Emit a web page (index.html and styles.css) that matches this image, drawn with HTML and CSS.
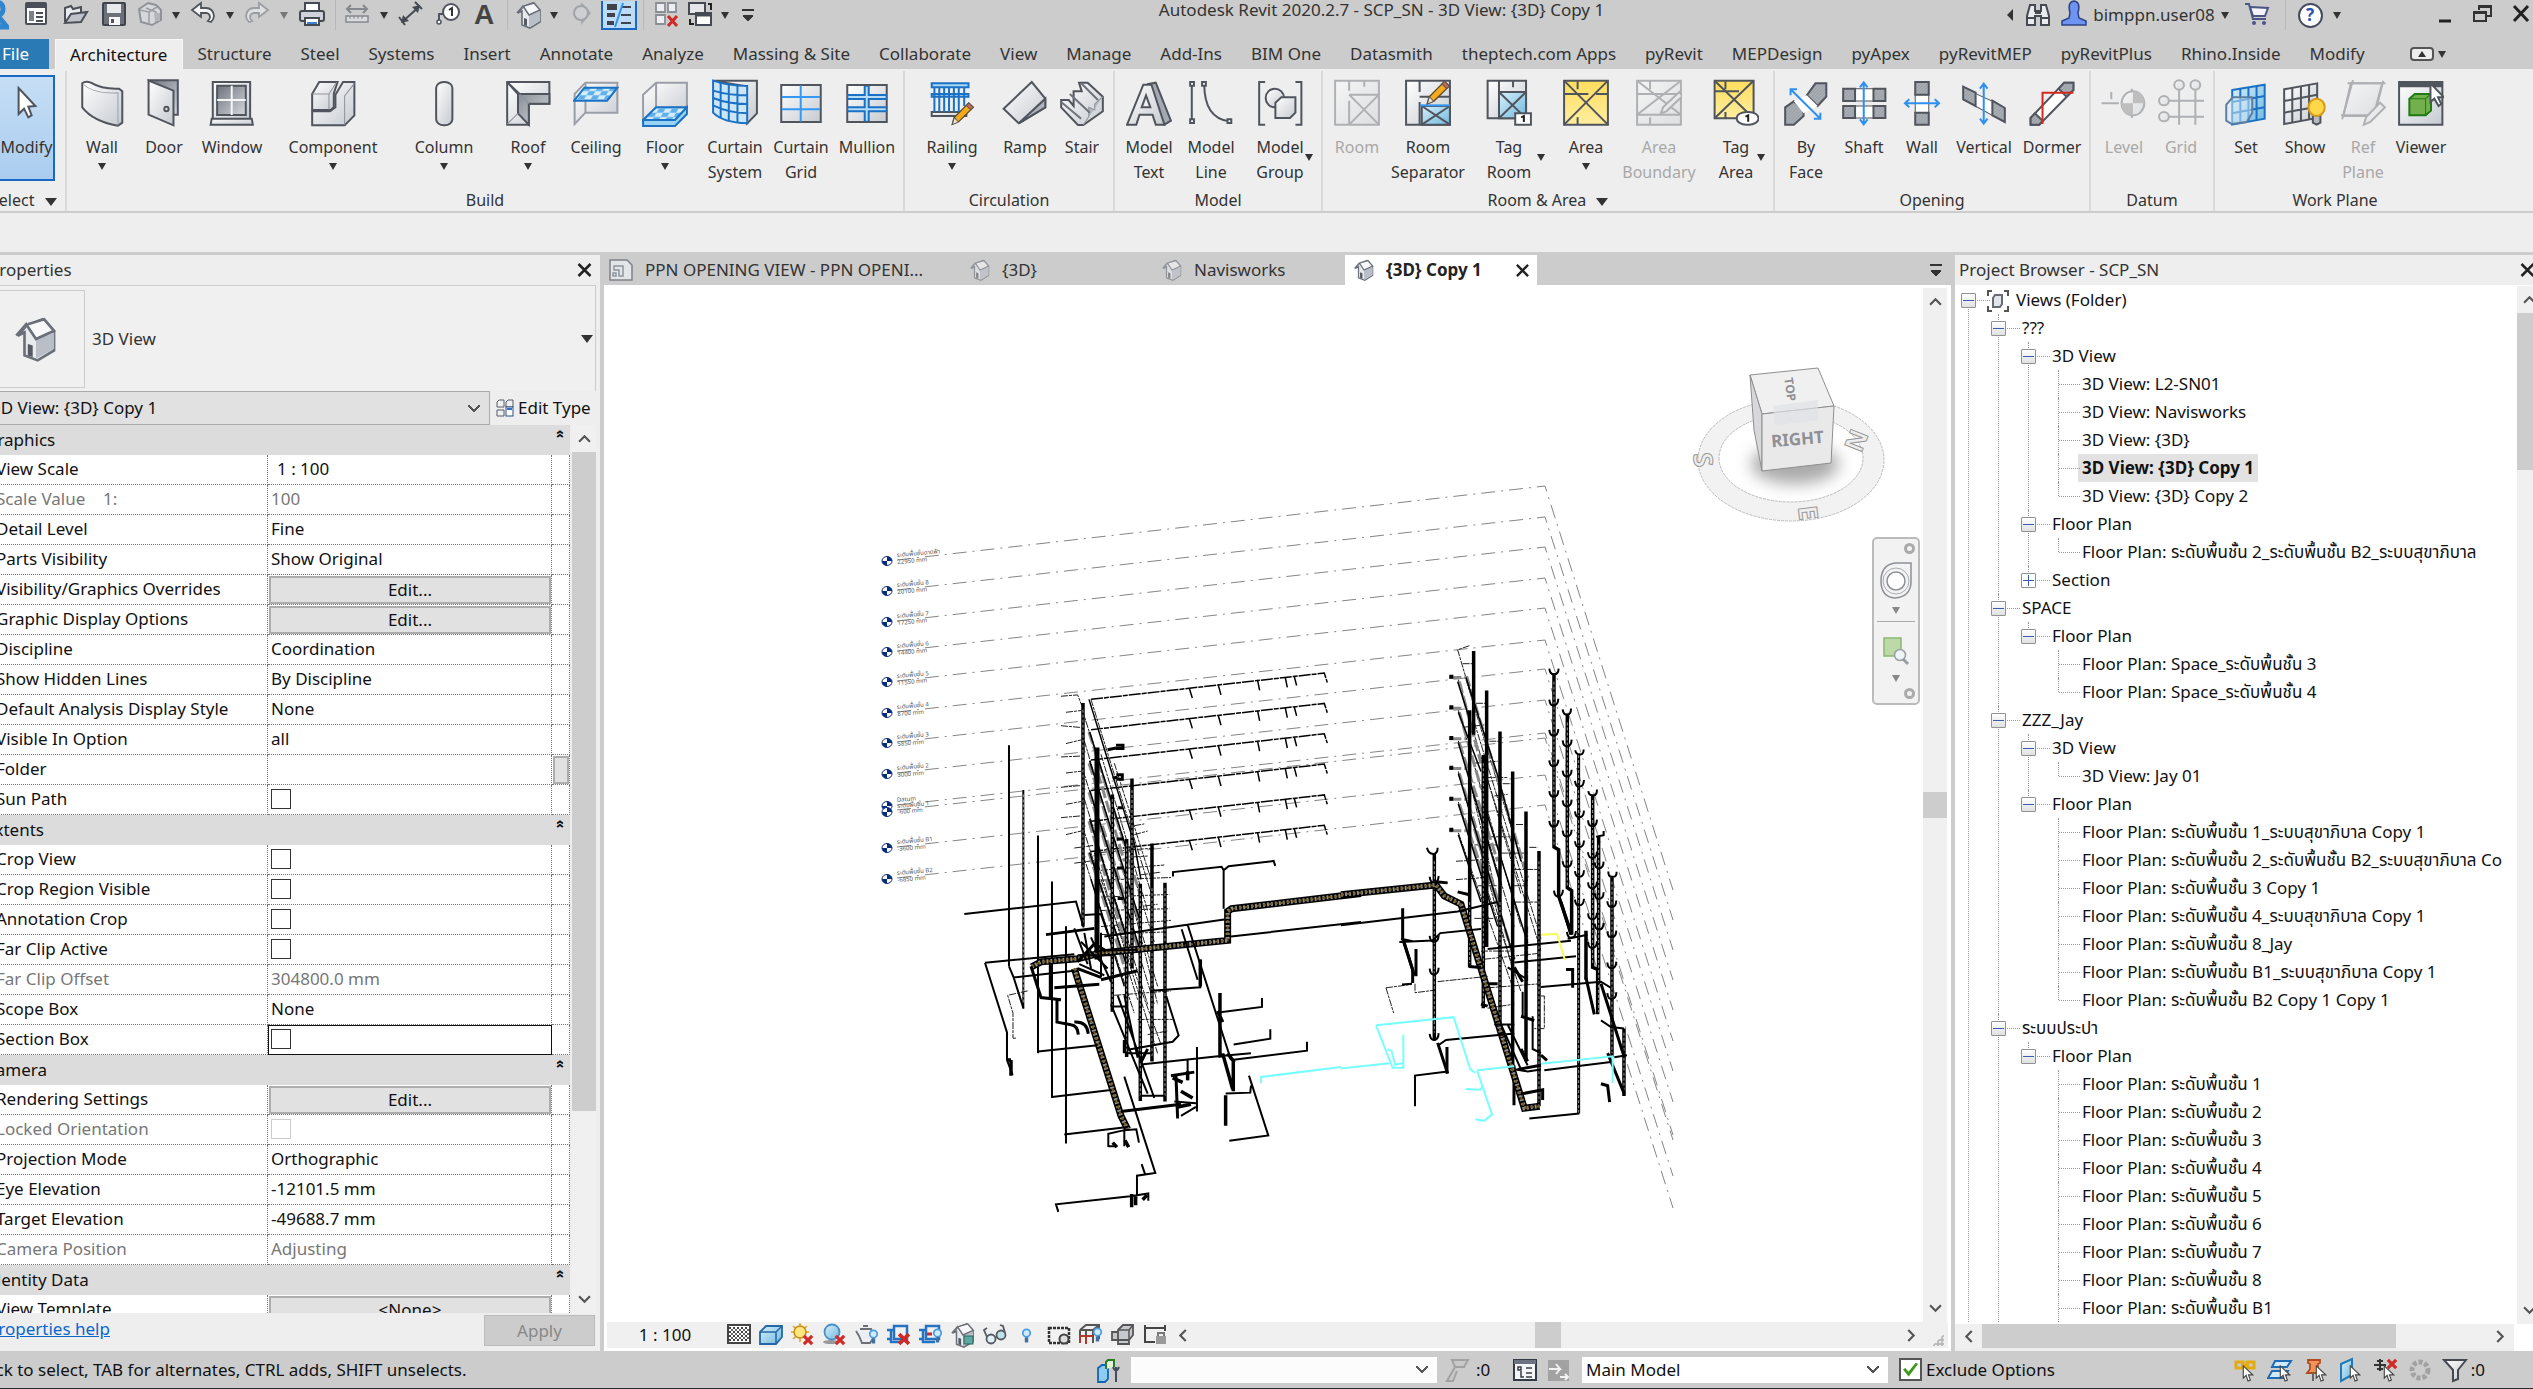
FILE: index.html
```html
<!DOCTYPE html>
<html lang="en">
<head>
<meta charset="utf-8">
<title>Autodesk Revit 2020.2.7 - SCP_SN - 3D View: {3D} Copy 1</title>
<link rel="stylesheet" href="styles.css">
</head>
<body>
<svg class="defs" aria-hidden="true">
  <defs>
    <linearGradient id="metal" x1="0" y1="0" x2="1" y2="1"><stop offset="0" stop-color="#fff"/><stop offset="1" stop-color="#c6cad0"/></linearGradient>
    <linearGradient id="steel" x1="0" y1="0" x2="1" y2="1"><stop offset="0" stop-color="#6d727c"/><stop offset="1" stop-color="#d5d8dd"/></linearGradient>
    <linearGradient id="sky" x1="0" y1="0" x2="1" y2="1"><stop offset="0" stop-color="#d8effa"/><stop offset="1" stop-color="#6fb9df"/></linearGradient>
    <linearGradient id="gold" x1="0" y1="0" x2="0" y2="1"><stop offset="0" stop-color="#ffdd5c"/><stop offset="1" stop-color="#ffeea0"/></linearGradient>
    <pattern id="tiles" width="24" height="26" patternUnits="userSpaceOnUse" patternTransform="skewX(-20)"><rect width="24" height="26" fill="#d4ecfb"/><path d="M0 0h12v13H0zM12 13h12v13H12z" fill="#5fb0ea" stroke="none"/></pattern>
    <pattern id="hatch" width="6" height="10" patternUnits="userSpaceOnUse"><rect width="6" height="10" fill="#a9adb4"/><path d="M0 10L6 0" stroke="#7d828a"/></pattern>
    <symbol id="house" viewBox="0 0 26 28"><path d="M2 12L6 10V24L14 27L24 21V10L17 2L7 6Z" fill="#e8eaee" stroke="#6a6f78" stroke-width="1.6"/><path d="M13 14V26L24 20V10Z" fill="#b9bec7"/><path d="M1 12L7 5L13 14L24 9L18 2L8 5" fill="#f8f8fa" stroke="#6a6f78" stroke-width="1.6"/><path d="M8 17l3 1v7l-3-1z" fill="#555a63"/></symbol>
    <symbol id="pencil" viewBox="0 0 44 74"><path d="M2 72L6 50L34 4L43 18L14 64Z" fill="#f6ab1c" stroke="#5c4a2a" stroke-width="3"/><path d="M34 4L43 18L38 26L29 12Z" fill="#c9674a"/><path d="M2 72L6 50L14 64Z" fill="#f3e3c8"/></symbol>
    <symbol id="redx" viewBox="0 0 10 10"><path d="M1.5 1.5L8.5 8.5M8.5 1.5L1.5 8.5" stroke="#cf2a27" stroke-width="2.6"/></symbol>
    <symbol id="bulb" viewBox="0 0 12 20"><circle cx="6" cy="6" r="4.4" fill="#cfeafc" stroke="#4a9be0" stroke-width="2"/><path d="M4 11h4v6H4z" fill="#3f6fa3"/></symbol>
    <symbol id="cursor" viewBox="0 0 12 18"><path d="M1 1V14L4 11L6 17L8.500 16L6.500 10.500H11Z" fill="#fff" stroke="#444" stroke-width="1.200"/></symbol>
  </defs>
</svg>

<div class="app">
  <header class="titlebar">
    <div class="qat">
      <button class="tool" aria-label="Revit"><svg class="q" viewBox="0 0 26 30"><path d="M6 2H14Q20 3 20 9Q20 14 15 16L24 27H17L9 16M9 7V26" fill="none" stroke="#2f86cf" stroke-width="5"/></svg></button>
      <button class="tool" aria-label="Project browser"><svg class="q" viewBox="0 0 26 30"><rect x="3" y="3" width="20" height="21" rx="1" fill="#fff" stroke="#4b4f57" stroke-width="2"/><path d="M3 6H23" stroke="#4b4f57" stroke-width="4"/><path d="M6 11h5v10H6z" fill="#7a7f88"/><path d="M13 13h7M13 17h7M13 21h7" stroke="#4b4f57" stroke-width="2"/></svg></button>
      <button class="tool" aria-label="Open"><svg class="q" viewBox="0 0 26 30"><path d="M2 22V8L8 6L10 9L18 7V12" fill="#e9ebef" stroke="#4b4f57" stroke-width="2"/><path d="M2 23L8 14L24 12L18 22Z" fill="#bfc4cc" stroke="#4b4f57" stroke-width="2"/></svg></button>
      <button class="tool" aria-label="Save"><svg class="q" viewBox="0 0 26 30"><rect x="2" y="3" width="22" height="22" rx="1" fill="#6b7079" stroke="#3f434b" stroke-width="2"/><path d="M6 4h14v9H6z" fill="#e8eaee"/><path d="M8 17h11v8H8z" fill="#f6f6f8"/><path d="M10 19h3v4h-3z" fill="#555"/></svg></button>
      <button class="tool" aria-label="Synchronize" disabled><svg class="q" viewBox="0 0 26 30"><path d="M2 9L11 3L19 5L24 10V20L15 25L4 22Z" fill="#d6d7da" stroke="#8f9298" stroke-width="2"/><path d="M3 10L12 12V24M12 12L20 7M9 8L19 12V22" fill="none" stroke="#9b9ea4" stroke-width="1.500"/><path d="M17 13h6v8h-5z" fill="#b2b4b9"/></svg></button>
      <i class="caret"></i>
      <button class="tool" aria-label="Undo"><svg class="q" viewBox="0 0 26 30"><path d="M11 3L2 10L11 17V13H17Q20 14 20 17Q20 19 18 21L21 22Q24 19 24 16Q23 8 16 8H11Z" fill="#f4f5f7" stroke="#50555d" stroke-width="1.800"/></svg></button>
      <i class="caret"></i>
      <button class="tool" aria-label="Redo" disabled><svg class="q" viewBox="0 0 26 30"><path d="M15 3L24 10L15 17V13H9Q6 14 6 17Q6 19 8 21L5 22Q2 19 2 16Q3 8 10 8H15Z" fill="#dfe0e2" stroke="#9a9da3" stroke-width="1.800"/></svg></button>
      <i class="caret pale"></i>
      <button class="tool" aria-label="Print"><svg class="q" viewBox="0 0 26 30"><path d="M6 12V3H20V12" fill="#fff" stroke="#454a52" stroke-width="2"/><rect x="1" y="11" width="24" height="10" rx="2" fill="#cfd2d8" stroke="#454a52" stroke-width="2"/><path d="M6 18H20V25H6Z" fill="#fff" stroke="#454a52" stroke-width="2"/><path d="M8 22h10v2H8z" fill="#3b83cf"/></svg></button>
      <i class="bar"></i>
      <button class="tool" aria-label="Measure"><svg class="q" viewBox="0 0 26 30"><path d="M3 9H23M7 5L3 9L7 13M19 5L23 9L19 13" fill="none" stroke="#85888e" stroke-width="2"/><rect x="2" y="16" width="22" height="6" fill="#d9dbde" stroke="#85888e" stroke-width="1.500"/><path d="M6 16v3M10 16v3M14 16v3M18 16v3" stroke="#85888e"/></svg></button>
      <i class="caret"></i>
      <button class="tool" aria-label="Aligned dimension"><svg class="q" viewBox="0 0 26 30"><path d="M4 22L22 6M1 17L7 25M17 2L24 9" stroke="#454a52" stroke-width="2"/><path d="M3 23l2-8 6 6zM22 5l-2 8-6-6z" fill="#454a52"/></svg></button>
      <button class="tool" aria-label="Tag"><svg class="q" viewBox="0 0 26 30"><path d="M4 22V14H10" fill="none" stroke="#50555d" stroke-width="2"/><circle cx="4" cy="22" r="2" fill="#fff" stroke="#50555d" stroke-width="1.500"/><circle cx="16" cy="12" r="8" fill="#fff" stroke="#50555d" stroke-width="2"/><path d="M14 10L17 8V16" fill="none" stroke="#333" stroke-width="2"/></svg></button>
      <button class="tool letter" aria-label="Text">A</button>
      <i class="bar"></i>
      <button class="tool" aria-label="Default 3D view"><svg class="q"><use href="#house"/></svg></button>
      <i class="caret"></i>
      <button class="tool" aria-label="Section" disabled><svg class="q" viewBox="0 0 26 30"><path d="M12 2L22 13L12 25Z" fill="#a5a8ad"/><circle cx="12" cy="13" r="7" fill="#cdcfd2" stroke="#a0a3a8" stroke-width="2"/></svg></button>
      <button class="tool on" aria-label="Thin lines"><svg class="q" viewBox="0 0 26 30"><path d="M1 6H11" stroke="#3f434b" stroke-width="6"/><path d="M15 6H25M15 14H25M15 22H25" stroke="#3f434b" stroke-width="2"/><path d="M1 14H9M1 22H8" stroke="#3f434b" stroke-width="4"/><path d="M17 2L9 26" stroke="#2f93f5" stroke-width="2"/></svg></button>
      <i class="bar"></i>
      <button class="tool" aria-label="Close inactive views"><svg class="q" viewBox="0 0 26 30"><path d="M3 3h9v9H3zM15 3h8v9h-8zM3 15h9v9H3z" fill="#eceef1" stroke="#8b8e95" stroke-width="1.800"/><path d="M15 16L24 26M24 16L15 26" stroke="#cf2a27" stroke-width="3"/></svg></button>
      <button class="tool" aria-label="Switch windows"><svg class="q" viewBox="0 0 26 30"><rect x="2" y="3" width="16" height="11" fill="#e4e6ea" stroke="#454a52" stroke-width="2"/><rect x="9" y="13" width="15" height="12" fill="#fff" stroke="#454a52" stroke-width="2"/><path d="M9 15h15" stroke="#454a52" stroke-width="3"/><path d="M21 4h3v6M3 19v5h4" fill="none" stroke="#222" stroke-width="2"/></svg></button>
      <i class="caret"></i>
      <i class="caret lined"></i>
    </div>
    <h1 class="title">Autodesk Revit 2020.2.7 - SCP_SN - 3D View: {3D} Copy 1</h1>
    <div class="account">
      <i class="caret left"></i>
      <button class="tool" aria-label="Search"><svg class="q" viewBox="0 0 26 30"><path d="M5 5h5v6h6V5h5l3 11v9h-8v-9h-6v9H2v-9z" fill="#e9ebee" stroke="#454a52" stroke-width="2"/><path d="M2 18h8M16 18h8M10 13h6" stroke="#454a52" stroke-width="2"/></svg></button>
      <button class="tool" aria-label="Account"><svg class="q" viewBox="0 0 26 30"><path d="M9 13Q6 2 13 1Q20 2 17 13L18 18L25 21V25H1V21L8 18Z" fill="#6d94f0" stroke="#2c4386" stroke-width="1.500"/></svg></button>
      <span class="user">bimppn.user08</span>
      <i class="caret"></i>
      <button class="tool" aria-label="App store"><svg class="q" viewBox="0 0 26 30"><path d="M1 4H5L9 19H22" fill="none" stroke="#4c5685" stroke-width="2"/><path d="M6 7L24 8L21 16H9Z" fill="#f4f5fa" stroke="#4c5685" stroke-width="2"/><circle cx="10" cy="23" r="2" fill="#4c5685"/><circle cx="20" cy="23" r="2" fill="#4c5685"/></svg></button>
      <i class="bar"></i>
      <button class="help" aria-label="Help">?</button>
      <i class="caret"></i>
      <span></span>
      <button class="tool" aria-label="Minimize"><svg class="q" viewBox="0 0 26 30"><path d="M7 21H19" stroke="#222" stroke-width="3"/></svg></button>
      <button class="tool" aria-label="Restore"><svg class="q" viewBox="0 0 26 30"><path d="M10 10V6H22V16H18" fill="none" stroke="#333" stroke-width="2"/><path d="M10 6.500H22" stroke="#333" stroke-width="3"/><rect x="5" y="12" width="12" height="9" fill="none" stroke="#333" stroke-width="2"/><path d="M5 12.500H17" stroke="#333" stroke-width="3"/></svg></button>
      <button class="tool" aria-label="Close"><svg class="q" viewBox="0 0 26 30"><path d="M6 6L20 21M20 6L6 21" stroke="#222" stroke-width="3"/></svg></button>
    </div>
  </header>

  <nav class="tabs">
    <a class="tab file" href="#file">File</a><a class="tab current" href="#a">Architecture</a><a class="tab" href="#a">Structure</a><a class="tab" href="#a">Steel</a><a class="tab" href="#a">Systems</a><a class="tab" href="#a">Insert</a><a class="tab" href="#a">Annotate</a><a class="tab" href="#a">Analyze</a><a class="tab" href="#a">Massing &amp; Site</a><a class="tab" href="#a">Collaborate</a><a class="tab" href="#a">View</a><a class="tab" href="#a">Manage</a><a class="tab" href="#a">Add-Ins</a><a class="tab" href="#a">BIM One</a><a class="tab" href="#a">Datasmith</a><a class="tab" href="#a">theptech.com Apps</a><a class="tab" href="#a">pyRevit</a><a class="tab" href="#a">MEPDesign</a><a class="tab" href="#a">pyApex</a><a class="tab" href="#a">pyRevitMEP</a><a class="tab" href="#a">pyRevitPlus</a><a class="tab" href="#a">Rhino.Inside</a><a class="tab" href="#a">Modify</a>
    <button class="collapse" aria-label="Minimize ribbon"><i class="caret up"></i></button><i class="caret"></i>
  </nav>

  <div class="ribbon">
    <section class="panel select">
      <div class="cmds"><button class="cmd modify"><svg class="r" viewBox="4 234 85 150" preserveAspectRatio="none"><path d="M31 264V342L41 326L49 352L55 346L49 320L62 318Z" fill="#fff"/></svg><span>Modify</span></button></div>
      <h2>Select <i class="caret big"></i></h2>
    </section>
    <section class="panel build">
      <div class="cmds">
        <button class="cmd"><svg class="r" viewBox="146 234 85 150" preserveAspectRatio="none"><path d="M152 250Q158 242 168 248Q188 268 220 266L226 274V368L218 377Q172 364 152 322Z"/><path d="M153 252Q175 284 218 278V376" fill="none" stroke="#9da1a9" stroke-width="1"/></svg><span>Wall</span><i class="caret"></i></button>
        <button class="cmd"><svg class="r" viewBox="260 234 85 150" preserveAspectRatio="none"><path d="M274 241H328V344H300Z" fill="url(#steel)"/><path d="M274 242L320 272V376L274 344Z"/><ellipse cx="307" cy="327" rx="4" ry="7"/></svg><span>Door</span></button>
        <button class="cmd"><svg class="r" viewBox="385 234 85 150" preserveAspectRatio="none"><rect x="392" y="246" width="69" height="112"/><rect x="400" y="257" width="53" height="88" fill="url(#steel)"/><path d="M427 257V345M400 300H453" stroke="#f4f5f7" stroke-width="2"/><path d="M390 356H464L466 374H388Z"/></svg><span>Window</span></button>
        <button class="cmd"><svg class="r" viewBox="573 234 85 150" preserveAspectRatio="none"><path d="M577 282L590 246H624L617 280V322L611 330H577Z"/><path d="M577 282H608L622 247M608 282V328" fill="none" stroke="#8e929a" stroke-width="1"/><path d="M577 334H610L620 322V284L634 246H655V346L637 376H577Z"/><path d="M655 250L637 288V374" fill="none" stroke="#8e929a" stroke-width="1"/></svg><span>Component</span><i class="caret"></i></button>
        <button class="cmd"><svg class="r" viewBox="778 234 85 150" preserveAspectRatio="none"><rect x="806" y="246" width="30" height="130" rx="14" ry="18"/></svg><span>Column</span><i class="caret"></i></button>
        <button class="cmd"><svg class="r" viewBox="933 234 85 150" preserveAspectRatio="none"><path d="M937 246H1015V311H977V374H937Z"/><path d="M937 246L960 282H1015V311H977V374L957 340V282Z" fill="url(#steel)"/><path d="M960 282L977 311M937 372L957 340" stroke="#8e929a" stroke-width="1"/></svg><span>Roof</span><i class="caret"></i></button>
        <button class="cmd"><svg class="r" viewBox="1059 234 85 150" preserveAspectRatio="none"><path d="M1062 282L1082 248H1141V338H1082L1062 372Z" stroke="#9a9ea6"/><path d="M1082 248V338" stroke="#9a9ea6"/><path d="M1080 263H1141L1122 302H1061Z" fill="url(#tiles)" stroke="#1b72c4"/></svg><span>Ceiling</span></button>
        <button class="cmd"><svg class="r" viewBox="1182 234 85 150" preserveAspectRatio="none"><path d="M1184 284L1208 248H1265V322L1208 324L1184 360Z" stroke="#9a9ea6"/><path d="M1208 248V322" stroke="#9a9ea6"/><path d="M1208 322H1265L1243 360H1184Z" fill="url(#tiles)" stroke="#1b72c4"/><path d="M1184 360H1243L1265 322V342L1243 378H1184Z" fill="#9ad4f5" stroke="#1b72c4"/></svg><span>Floor</span><i class="caret"></i></button>
        <button class="cmd"><svg class="r" viewBox="1315 234 85 150" preserveAspectRatio="none"><path d="M1317 242H1398V340L1380 370L1376 258Z"/><path d="M1317 242Q1345 258 1380 258V370Q1335 368 1317 338Z" fill="#cbe6f8" stroke="#1b72c4"/><path d="M1331 248V354M1346 254V364M1362 258V369M1317 272Q1345 286 1380 286M1317 294Q1345 312 1380 312M1317 316Q1345 338 1380 340" fill="none" stroke="#1b72c4"/></svg><span>Curtain<br>System</span></button>
        <button class="cmd"><svg class="r" viewBox="1434 234 85 150" preserveAspectRatio="none"><rect x="1440" y="255" width="73" height="111"/><path d="M1476 256V365M1441 291H1512M1441 328H1512" stroke="#3598f4"/></svg><span>Curtain<br>Grid</span></button>
        <button class="cmd"><svg class="r" viewBox="-10 234 85 150" preserveAspectRatio="none"><rect x="-4" y="255" width="73" height="111"/><path d="M-4 291H69M-4 328H69M32 258V364" stroke="#1b72c4" stroke-width="6"/><path d="M-2 291H67M-2 328H67M32 260V362" stroke="#b6dcf7" stroke-width="2"/></svg><span>Mullion</span></button>
      </div>
      <h2>Build</h2>
    </section>
    <section class="panel circulation">
      <div class="cmds">
        <button class="cmd"><svg class="r" viewBox="147 234 85 150" preserveAspectRatio="none"><path d="M152 336H216V348H152Z"/><path d="M152 250H220V262H152ZM152 282H220V290H152Z" fill="#a9d6f5" stroke="#1b72c4"/><path d="M157 262V336M166 262V336M175 262V336M184 262V336M193 262V336M202 262V336M212 262V318" stroke="#1b72c4" stroke-width="2"/><use href="#pencil" x="188" y="302" width="42" height="76"/></svg><span>Railing</span><i class="caret"></i></button>
        <button class="cmd"><svg class="r" viewBox="281 234 85 150" preserveAspectRatio="none"><path d="M284 326L336 246L361 296V322L312 370Z"/><path d="M312 370L361 296V322Z" fill="#aeb2ba"/></svg><span>Ramp</span></button>
        <button class="cmd"><svg class="r" viewBox="383 234 85 150" preserveAspectRatio="none"><path d="M420 248H436L464 290V334L428 375H418L387 322V300H401L410 318V274H425Z"/><path d="M464 290L449 312V330L438 322V350L428 375" fill="#b4b8c0" stroke="#8e929a" stroke-width="1"/><path d="M403 282L440 338M424 250L455 300M387 306L424 356" stroke="#6e737c" stroke-width="2"/></svg><span>Stair</span></button>
      </div>
      <h2>Circulation</h2>
    </section>
    <section class="panel model">
      <div class="cmds">
        <button class="cmd"><svg class="r" viewBox="511 234 85 150" preserveAspectRatio="none"><path d="M552 252L566 248L594 362L582 374L570 340H552L560 300Z" fill="#a4a9b2"/><path fill-rule="evenodd" d="M513 374L543 254H558L582 374H566L560 344H536L530 374ZM540 322H556L548 286Z"/></svg><span>Model<br>Text</span></button>
        <button class="cmd"><svg class="r" viewBox="622 234 85 150" preserveAspectRatio="none"><path d="M629 252V364M652 252Q652 354 698 364" fill="none"/><path d="M626 246h7v11h-7zM626 358h7v11h-7zM648 246h7v11h-7zM695 358h7v11h-7z" fill="#fff"/></svg><span>Model<br>Line</span></button>
        <button class="cmd wide"><svg class="r" viewBox="749 234 85 150" preserveAspectRatio="none"><path d="M764 246H753V374H764M820 246H831V374H820" fill="none"/><ellipse cx="782" cy="294" rx="17" ry="28"/><path d="M783 308L794 292H820V338L810 354H783Z"/></svg><span>Model<br>Group</span><i class="caret side"></i></button>
      </div>
      <h2>Model</h2>
    </section>
    <section class="panel rooms">
      <div class="cmds">
        <button class="cmd" disabled><svg class="r" viewBox="893 234 85 150" preserveAspectRatio="none"><rect x="895" y="242" width="81" height="132"/><path d="M921 242V272M921 302V374M921 284H976M949 242V260M921 284L976 374M976 284L921 374"/></svg><span>Room</span></button>
        <button class="cmd"><svg class="r" viewBox="1024 234 85 150" preserveAspectRatio="none"><rect x="1026" y="242" width="81" height="132"/><path d="M1055 318H1107V374H1055Z" fill="url(#sky)"/><path d="M1051 242V276M1051 306V374M1055 318L1107 374M1107 318L1055 374M1051 290H1107"/><path d="M1052 316H1107" stroke="#3598f4"/><use href="#pencil" x="1063" y="240" width="44" height="74"/></svg><span>Room<br>Separator</span></button>
        <button class="cmd wide"><svg class="r" viewBox="1176 234 85 150" preserveAspectRatio="none"><path d="M1179 242H1250V355H1179Z"/><path d="M1200 276H1250V355H1200Z" fill="url(#sky)"/><path d="M1200 242V355M1200 276L1250 355M1250 276L1200 355M1226 242V262"/><rect x="1230" y="340" width="29" height="34" fill="#fff"/><path d="M1241 352L1246 348V366" fill="none" stroke="#222"/></svg><span>Tag<br>Room</span><i class="caret side"></i></button>
        <button class="cmd"><svg class="r" viewBox="1313 234 85 150" preserveAspectRatio="none"><rect x="1315" y="242" width="81" height="132" fill="url(#gold)"/><path d="M1315 242L1396 374M1396 242L1315 374M1340 244V268M1315 282H1360M1374 282H1396M1340 352V374"/></svg><span>Area</span><i class="caret"></i></button>
        <button class="cmd" disabled><svg class="r" viewBox="1450 234 85 150" preserveAspectRatio="none"><rect x="1452" y="242" width="81" height="132"/><path d="M1452 242L1533 344M1533 242L1452 344M1476 242V268M1452 282H1533M1452 344H1533M1476 352V374"/><path d="M1496 340L1500 322L1530 276L1536 288L1506 334Z"/></svg><span>Area<br>Boundary</span></button>
        <button class="cmd wide"><svg class="r" viewBox="42 234 85 150" preserveAspectRatio="none"><rect x="45" y="242" width="72" height="113" fill="url(#gold)"/><path d="M45 242L117 355M117 242L45 355M65 244V268M45 274H90M65 336V355"/><rect x="86" y="336" width="40" height="38" rx="18" fill="#fff"/><path d="M102 350L107 346V365" fill="none" stroke="#222"/></svg><span>Tag<br>Area</span><i class="caret side"></i></button>
      </div>
      <h2>Room &amp; Area <i class="caret big"></i></h2>
    </section>
    <section class="panel opening">
      <div class="cmds">
        <button class="cmd"><svg class="r" viewBox="176 234 85 150" preserveAspectRatio="none"><path d="M180 374V322L196 304L214 330V348L196 374ZM220 286L236 250H256V290L240 318Z" fill="url(#hatch)"/><path d="M196 304L220 286L240 318L214 340Z" fill="#fff" stroke="none"/><path d="M190 268L245 356M190 286V268H202M233 356H245V338" fill="none" stroke="#2e90f0"/></svg><span>By<br>Face</span></button>
        <button class="cmd"><svg class="r" viewBox="280 234 85 150" preserveAspectRatio="none"><path d="M285 266H361V303H285ZM285 318H361V354H285Z" fill="#fff" stroke-width="1"/><path d="M284 266H306V303H284ZM340 266H362V303H340ZM284 318H306V354H284ZM340 318H362V354H340Z" fill="url(#hatch)"/><path d="M322 246V374M315 262L322 247L329 262M315 358L322 373L329 358" fill="none" stroke="#2e90f0"/></svg><span>Shaft</span></button>
        <button class="cmd"><svg class="r" viewBox="391 234 85 150" preserveAspectRatio="none"><path d="M421 284H446V338H421Z" fill="#fff" stroke-width="1"/><path d="M421 246H446V284H421ZM421 338H446V374H421Z" fill="url(#hatch)"/><path d="M402 310H465M410 298L402 310L410 322M457 298L465 310L457 322" fill="none" stroke="#2e90f0"/></svg><span>Wall</span></button>
        <button class="cmd"><svg class="r" viewBox="504 234 85 150" preserveAspectRatio="none"><path d="M530 280L562 304V346L530 318Z" fill="#fff" stroke-width="1"/><path d="M508 260L531 278V318L508 298ZM562 302L585 324V366L562 346Z" fill="url(#hatch)"/><path d="M546 250V372M539 266L546 251L553 266M539 356L546 371L553 356" fill="none" stroke="#2e90f0"/></svg><span>Vertical</span></button>
        <button class="cmd"><svg class="r" viewBox="629 234 85 150" preserveAspectRatio="none"><path d="M632 374V354L694 248H711V270L648 374Z" fill="#fff"/><path d="M684 266L694 248H711V270L698 290ZM632 374V354L640 340L654 362L648 374Z" fill="url(#hatch)"/><path d="M654 372V278H711" fill="none" stroke="#d3281e"/></svg><span>Dormer</span></button>
      </div>
      <h2>Opening</h2>
    </section>
    <section class="panel datum">
      <div class="cmds">
        <button class="cmd" disabled><svg class="r" viewBox="767 234 85 150" preserveAspectRatio="none"><path d="M768 310H800M824 266V354M786 276V298"/><ellipse cx="826" cy="310" rx="21" ry="36"/><path d="M826 274Q847 276 847 310H826ZM826 346Q805 344 805 310H826Z" fill="#777" stroke="none"/></svg><span>Level</span></button>
        <button class="cmd" disabled><svg class="r" viewBox="870 234 85 150" preserveAspectRatio="none"><path d="M909 270V374M939 270V374M890 302H955M890 350H955"/><ellipse cx="909" cy="255" rx="9" ry="14"/><ellipse cx="939" cy="255" rx="9" ry="14"/><ellipse cx="881" cy="302" rx="9" ry="14"/><ellipse cx="881" cy="350" rx="9" ry="14"/></svg><span>Grid</span></button>
      </div>
      <h2>Datum</h2>
    </section>
    <section class="panel workplane">
      <div class="cmds">
        <button class="cmd"><svg class="r" viewBox="992 234 85 150" preserveAspectRatio="none"><path d="M1009 270L1069 254V356L1009 374Z" fill="url(#sky)" stroke="#1b72c4"/><path d="M1024 266V370M1039 262V366M1054 258V361M1009 306L1069 288M1009 340L1069 322" stroke="#1b72c4"/><path d="M998 314L1010 292H1046V338L1036 366L1008 372L998 362Z" fill="#dcecf6" fill-opacity=".5" stroke="#5a7ea5"/></svg><span>Set</span></button>
        <button class="cmd"><svg class="r" viewBox="1101 234 85 150" preserveAspectRatio="none"><path d="M1105 268L1166 250V354L1105 372Z"/><path d="M1120 264V367M1136 260V363M1151 255V358M1105 303L1166 284M1105 338L1166 320"/><path d="M1158 346H1172V368L1165 374L1158 368Z" fill="#b7bac0"/><ellipse cx="1165" cy="322" rx="15" ry="26" fill="#ffd84a" stroke="#d69a1a"/></svg><span>Show</span></button>
        <button class="cmd" disabled><svg class="r" viewBox="1210 234 85 150" preserveAspectRatio="none"><path d="M1230 250H1288L1272 348H1216Z"/><path d="M1234 240L1214 358M1224 250H1294M1212 346H1276M1290 242L1272 356"/><path d="M1254 374L1258 352L1284 308L1293 322L1266 366Z"/></svg><span>Ref<br>Plane</span></button>
        <button class="cmd"><svg class="r" viewBox="1317 234 85 150" preserveAspectRatio="none"><rect x="1319" y="246" width="80" height="128"/><path d="M1319 254H1399" stroke-width="5"/><path d="M1338 296L1348 282H1378V332L1368 346H1338Z" fill="#73b04d" stroke="#1f7a12"/><path d="M1338 296H1368V346M1368 296L1378 282" fill="none" stroke="#1f7a12" stroke-width="1"/><path d="M1377 250V306L1384 296L1392 318L1397 312L1391 292H1402Z" fill="#fff"/></svg><span>Viewer</span></button>
      </div>
      <h2>Work Plane</h2>
    </section>
  </div>
  <div class="options"></div>

  <main class="workspace">
    <aside class="props">
      <header class="phead"><h2>Properties</h2><button class="x" aria-label="Close"><svg viewBox="0 0 14 14"><path d="M1 1L13 13M13 1L1 13"/></svg></button></header>
      <div class="type"><div class="thumbnail"><svg><use href="#house"/></svg></div><span>3D View</span><i class="caret big"></i></div>
      <div class="filter"><select aria-label="View"><option>3D View: {3D} Copy 1</option></select>
        <button class="edittype"><svg viewBox="0 0 18 18"><path d="M1 3L3 1H8V8H1ZM10 3L12 1H17V8H10ZM1 11H8V17H1Z" fill="#eef0f4" stroke="#555b66"/><rect x="10" y="8" width="7" height="9" fill="#fff" stroke="#2b4f86"/><path d="M11 10h5" stroke="#2b6fd0" stroke-width="2"/></svg>Edit Type</button></div>
      <div class="gridwrap">
        <div class="clip">
        <table class="ptable">
          <colgroup><col class="c1"><col class="c2"><col class="c3"></colgroup>
          <tbody>
          <tr class="sec"><th colspan="3">Graphics<button aria-label="Collapse">«</button></th></tr>
          <tr><td>View Scale</td><td class="in">1 : 100</td><td></td></tr>
          <tr class="ro"><td>Scale Value &nbsp;&nbsp; 1:</td><td>100</td><td></td></tr>
          <tr><td>Detail Level</td><td>Fine</td><td></td></tr>
          <tr><td>Parts Visibility</td><td>Show Original</td><td></td></tr>
          <tr><td>Visibility/Graphics Overrides</td><td><button class="edit">Edit...</button></td><td></td></tr>
          <tr><td>Graphic Display Options</td><td><button class="edit">Edit...</button></td><td></td></tr>
          <tr><td>Discipline</td><td>Coordination</td><td></td></tr>
          <tr><td>Show Hidden Lines</td><td>By Discipline</td><td></td></tr>
          <tr><td>Default Analysis Display Style</td><td>None</td><td></td></tr>
          <tr><td>Visible In Option</td><td>all</td><td></td></tr>
          <tr><td>Folder</td><td></td><td><button class="edit" aria-label="Browse folder"></button></td></tr>
          <tr><td><label for="sun">Sun Path</label></td><td><input type="checkbox" id="sun"></td><td></td></tr>
          <tr class="sec"><th colspan="3">Extents<button aria-label="Collapse">«</button></th></tr>
          <tr><td><label for="crop">Crop View</label></td><td><input type="checkbox" id="crop"></td><td></td></tr>
          <tr><td><label for="region">Crop Region Visible</label></td><td><input type="checkbox" id="region"></td><td></td></tr>
          <tr><td><label for="anno">Annotation Crop</label></td><td><input type="checkbox" id="anno"></td><td></td></tr>
          <tr><td><label for="far">Far Clip Active</label></td><td><input type="checkbox" id="far"></td><td></td></tr>
          <tr class="ro"><td>Far Clip Offset</td><td>304800.0 mm</td><td></td></tr>
          <tr><td>Scope Box</td><td>None</td><td></td></tr>
          <tr><td><label for="sbox">Section Box</label></td><td class="focus"><input type="checkbox" id="sbox"></td><td></td></tr>
          <tr class="sec"><th colspan="3">Camera<button aria-label="Collapse">«</button></th></tr>
          <tr><td>Rendering Settings</td><td><button class="edit">Edit...</button></td><td></td></tr>
          <tr class="ro"><td><label for="lock">Locked Orientation</label></td><td><input type="checkbox" id="lock" disabled></td><td></td></tr>
          <tr><td>Projection Mode</td><td>Orthographic</td><td></td></tr>
          <tr><td>Eye Elevation</td><td>-12101.5 mm</td><td></td></tr>
          <tr><td>Target Elevation</td><td>-49688.7 mm</td><td></td></tr>
          <tr class="ro"><td>Camera Position</td><td>Adjusting</td><td></td></tr>
          <tr class="sec"><th colspan="3">Identity Data<button aria-label="Collapse">«</button></th></tr>
          <tr><td>View Template</td><td><button class="edit">&lt;None&gt;</button></td><td></td></tr>
          </tbody>
        </table>
        </div>
        <div class="vsb p"><svg viewBox="0 0 12 8"><path d="M1 7L6 2L11 7"/></svg><div class="track"><i></i></div><svg viewBox="0 0 12 8"><path d="M1 1L6 6L11 1"/></svg></div>
      </div>
      <footer class="pfoot"><a href="#help">Properties help</a><button disabled>Apply</button></footer>
    </aside>

    <section class="doc">
      <nav class="views">
        <a class="view first" href="#v"><svg viewBox="0 0 24 22"><path d="M1 1H18L23 6V21H1Z" fill="#e3e5e8" stroke="#7d8188" stroke-width="1.500"/><path d="M5 7H14V17H10V11H5ZM4 14H7V17H4Z" fill="none" stroke="#8f959f" stroke-width="1.500"/></svg>PPN OPENING VIEW - PPN OPENI...</a>
        <a class="view dim" href="#v"><svg><use href="#house"/></svg>{3D}</a>
        <a class="view dim" href="#v"><svg><use href="#house"/></svg>Navisworks</a>
        <a class="view active" href="#v"><svg><use href="#house"/></svg>{3D} Copy 1<svg class="vx" viewBox="0 0 14 14"><path d="M1 1L13 13M13 1L1 13" stroke="#222" stroke-width="2.500"/></svg></a>
        <i class="caret lined end"></i>
      </nav>
      <div class="stage">
        <div class="canvas">
        <svg class="drawing" viewBox="603 285 1319 1037" preserveAspectRatio="xMidYMid slice">
          <defs>
            <g id="head"><ellipse rx="5" ry="4.500" fill="#fff" stroke="#062a7c"/><path d="M0 0V-4.500A5 4.500 0 0 1 5 0ZM0 0V4.500A5 4.500 0 0 1-5 0Z" fill="#062a7c"/></g>
            <g id="run" class="shared"><path d="M690 0L1390-59L1399-38" stroke-dasharray="12 1 5 1"/><path d="M985-25l9 22M1072-32l8 22M1190-42l6 22M1273-49l6 22M1300-51l7 20"/></g>
            <g id="y" class="shared"><path d="M-14-12Q-12 4 0 2Q12 2 13-14"/></g>
          </defs>
          <g class="levels">
            <path d="M896 560L1544 486L1672 890M896 590L1544 517L1672 920M896 621L1544 547L1672 950M896 651L1544 578L1672 980M896 681L1544 608L1672 1010M896 712L1544 640L1672 1041M896 742L1544 669L1672 1071M896 773L1544 700L1672 1102M896 805L1544 733L1672 1135M896 810L1544 738L1672 1140M896 847L1544 775L1672 1176M896 878L1544 805L1672 1208"/>
          </g>
          <use href="#head" x="886" y="561"/><use href="#head" x="886" y="591"/><use href="#head" x="886" y="622"/><use href="#head" x="886" y="652"/><use href="#head" x="886" y="682"/><use href="#head" x="886" y="713"/><use href="#head" x="886" y="743"/><use href="#head" x="886" y="774"/><use href="#head" x="886" y="806"/><use href="#head" x="886" y="812"/><use href="#head" x="886" y="848"/><use href="#head" x="886" y="879"/>
          <g class="tags">
            <g transform="translate(896 557) rotate(-5)"><text>ระดับพื้นชั้นดาดฟ้า</text><text y="7">22950 mm</text></g>
            <g transform="translate(896 587) rotate(-5)"><text>ระดับพื้นชั้น 8</text><text y="7">20100 mm</text></g>
            <g transform="translate(896 618) rotate(-5)"><text>ระดับพื้นชั้น 7</text><text y="7">17250 mm</text></g>
            <g transform="translate(896 648) rotate(-5)"><text>ระดับพื้นชั้น 6</text><text y="7">14400 mm</text></g>
            <g transform="translate(896 678) rotate(-5)"><text>ระดับพื้นชั้น 5</text><text y="7">11550 mm</text></g>
            <g transform="translate(896 709) rotate(-5)"><text>ระดับพื้นชั้น 4</text><text y="7">8700 mm</text></g>
            <g transform="translate(896 739) rotate(-5)"><text>ระดับพื้นชั้น 3</text><text y="7">5850 mm</text></g>
            <g transform="translate(896 770) rotate(-5)"><text>ระดับพื้นชั้น 2</text><text y="7">3000 mm</text></g>
            <g transform="translate(896 802) rotate(-5)"><text>Datum</text><text y="6">ระดับพื้นชั้น 1</text><text y="12">-600 mm</text></g>
            <g transform="translate(896 844) rotate(-5)"><text>ระดับพื้นชั้น B1</text><text y="7">-3600 mm</text></g>
            <g transform="translate(896 875) rotate(-5)"><text>ระดับพื้นชั้น B2</text><text y="7">-6850 mm</text></g>
          </g>
          <!-- west riser group -->
          <g class="pipe" transform="translate(860 540) scale(.3333 .4464)">
            <use href="#run" y="357"/><use href="#run" y="425"/><use href="#run" y="493"/><use href="#run" y="561"/><use href="#run" y="630"/><use href="#run" y="698"/>
            <g class="fine"><path d="M600 350L650 347L662 370M615 386L660 382M600 416L660 420M615 456L660 448M600 486L660 484M615 522L660 518M600 554L660 550M615 592L660 586M600 622L660 618M615 660L660 652M640 690L700 684M640 724L700 718M720 700L880 690M720 740L910 728M720 762L930 756M720 800L925 794M720 830L925 826M720 866L930 852M720 884L910 878M760 1020L930 1010M830 1074L940 1074M860 1108L920 1100M820 640L850 636M820 660L860 652M815 710L860 708M840 750L900 744M850 820L890 816"/>
            <path d="M664 380L880 900M670 450L890 1000M664 510L880 1040M670 580L860 1040M664 640L830 1030M664 700L820 1060M690 357L870 790M720 480L860 830M760 500L870 760M700 700L890 1150M720 760L900 1130M820 830L890 1040"/></g>
            <path class="grey" d="M684 430L840 800M684 500L838 860M684 565L838 930M684 630L800 920M684 700L800 980M710 520L790 720M724 640L800 820"/>
            <path d="M684 357L735 480L820 680L840 760M686 430L800 700M686 495L836 850M686 560L836 915M686 625L800 900M686 700L800 960M690 760L790 1000"/>
            <path d="M740 470L765 466M765 460H786V467H765M755 534L770 531M766 526H784V536H766M770 600H786M768 670H786M768 735H786M770 803H786" stroke-width="3"/>
            <g class="riser"><path d="M444 460V955M487 560V1050M531 662V1150M573 765V1250M615 865V1352" stroke-width="2"/><path d="M666 365V865M754 570V1057M797 670V1158M813 535V960M838 770V1257M873 680V1168M912 768V1258" stroke-width="3.500"/><path d="M708 465V940" stroke-width="5"/></g>
            <path class="core" d="M666 380V860M754 580V1050M797 680V1150M813 560V950M838 780V1250M912 780V1250M487 570V1040M873 780V1160"/>
            <path class="bundle" d="M640 960L780 1290L800 1320M512 956L540 945L650 938L720 925L1100 897V832L1112 826L1500 792"/><path class="grit" d="M640 960L780 1290L800 1320M512 956L540 945L650 938L720 925L1100 897V832L1112 826L1500 792"/><path class="ochre" d="M640 960L780 1290L800 1320M512 956L540 945L650 938L720 925L1100 897V832L1112 826L1500 792"/>
            <path stroke-width="3" d="M510 955L540 1025L600 1030M568 950V1025M588 1030V1080L630 1086Q650 1088 652 1108M640 1080Q678 1078 682 1106M580 1003L715 995M720 985L830 965M555 884L700 870M650 945L700 905L735 920M650 960L720 980M930 1200L1000 1192M945 1200L950 1296M780 1280L960 1264M790 1120V1150M840 1170L860 1140"/>
            <path stroke-width="2" d="M310 838L645 810L668 868M372 947L640 928M372 947L438 1103V1165L455 1198M444 955L458 980L640 965M458 980L487 1048M531 1146L710 1132M573 1248L750 1232M610 1332L800 1315M670 840L720 838L740 880M640 870L680 950M916 1022L953 1110L935 1124L800 1142M840 1175L1078 1156L1170 1150M1090 850L730 888M980 862L1110 1165M962 872L1010 985M1018 940V1002L870 1010M1110 888L1500 856M936 754V744L1082 732L1088 740V826M1088 740L1103 731L1238 719L1243 730M1078 1058L1203 1046V1026M1118 1130L1228 1117V1096M1112 1165L1338 1144V1124M1094 1240L1168 1238L1170 1222M1164 1200L1222 1334L1105 1346M790 1202L883 1418L828 1424V1470M842 1398L852 1420M592 1505L585 1488L808 1470L862 1464V1480M742 1360V1330L790 1322L826 1320L834 1350M790 1322V1358M742 1358H765M1008 1136V1280M940 1258L1005 1262M980 1165V1210M960 1290L1005 1270"/>
            <path class="fine" d="M500 1010L440 1020L456 1060V1116H465"/>
            <path stroke-width="3.500" d="M1018 940V1000M1077 1015V1160M1117 1165V1235M1094 1244V1312M1070 1055L1085 1080M1085 1150L1115 1230M1100 1150L1120 1170M450 1165V1200M440 1165H450M812 1465V1495M824 1470V1490M845 1478L858 1468M755 1350L768 1360M792 1345L803 1360M980 1190V1210M935 1205L965 1215M960 1235L995 1250M950 1270L990 1264"/>
            <g stroke-width="2"><path d="M660 900L740 960M690 890L750 990M650 930L760 930M670 880L690 960M720 880V980M655 950L730 975M700 920L830 918M750 1040L860 1240M770 1020L880 1250M790 1020L830 1160M754 1045H797M797 1150H873M838 1245H912"/></g>
          </g>
          <!-- east riser group -->
          <g class="pipe" transform="translate(1340 600) scale(.3333 .4082)">
            <g class="fine"><path d="M385 112L350 122L400 260M365 156H395M405 253H440M445 346H480M485 450H515M525 550H550M565 606H590M345 640L430 636M345 685L430 680M365 312L430 306M395 400L470 395M430 435H500M440 580H520M480 620H560M520 660H590M520 700H560M460 480L500 476M400 600H470M520 740H590M410 700H470M400 780H460M420 860H520M440 1000L520 990M430 880L590 866M440 950L600 940M560 800V940M600 970H610V1050H580M290 935L440 922M135 950L210 942M135 950L158 1012M222 940V962L280 956"/>
            <path d="M352 195L540 720M352 270L540 800M352 345L520 800M352 420L520 880M352 495L540 960M352 570L520 960M400 300L600 830M440 440L600 860M375 195L560 690M380 420L460 700M380 500L520 920"/></g>
            <path class="grey" d="M325 190H378L560 680M325 265H370M325 340H375M325 413H375M325 488H375M325 565H375M355 200L420 400M355 275L420 460M355 350L470 640M355 425L480 760M355 500L440 700M400 560L520 880"/>
            <path d="M350 200L385 290M352 275L420 420M352 350L480 700M352 425L520 880M352 500L470 800M352 575L420 740M375 190L470 430L540 640M440 530L560 840"/>
            <path d="M325 188h12M325 263h12M325 338h12M325 411h12M325 487h12M325 563h12" stroke-width="4"/>
            <g class="riser"><path stroke-width="3.500" d="M398 125V330M437 222V850M477 322V1040M515 420V1140M555 518V1130M386 270V900M427 380V1000M280 620V1080M594 615V1240M639 180V605L653 612V725L690 815M679 280V705L692 712V820M755 478V900L770 905V1015M773 580V940M813 680V1120M735 810V930M849 1050V1215"/><path stroke-width="3" d="M713 380V1258M185 755V830L215 905V938M225 855V922M318 1095V1160M519 1140V1238"/></g>
            <path class="core" d="M713 380V1258M594 640V1230M427 400V990M755 490V890M813 690V1110M280 640V1060M849 1060V1200M679 300V700M773 600V1010M639 200V600M386 740V890M477 740V1030"/>
            <path stroke-width="2" d="M222 1240V1165L320 1155M625 168Q627 182 639 182Q652 182 653 168M665 268Q667 282 678 280Q690 282 690 266M703 368Q704 378 716 378Q728 380 728 366M742 468Q744 480 756 478Q768 480 768 464M765 580L788 576V566M802 665Q802 680 814 678Q827 680 827 666M258 607Q262 622 277 622Q290 622 290 607"/>
            <g stroke-width="2"><use href="#y" x="639" y="256"/><use href="#y" x="639" y="330"/><use href="#y" x="639" y="405"/><use href="#y" x="639" y="480"/><use href="#y" x="639" y="553"/><use href="#y" x="679" y="356"/><use href="#y" x="679" y="430"/><use href="#y" x="679" y="503"/><use href="#y" x="679" y="577"/><use href="#y" x="679" y="652"/><use href="#y" x="716" y="455"/><use href="#y" x="716" y="530"/><use href="#y" x="716" y="603"/><use href="#y" x="716" y="676"/><use href="#y" x="716" y="746"/><use href="#y" x="755" y="552"/><use href="#y" x="755" y="630"/><use href="#y" x="755" y="704"/><use href="#y" x="755" y="780"/><use href="#y" x="755" y="850"/><use href="#y" x="775" y="655"/><use href="#y" x="775" y="730"/><use href="#y" x="775" y="805"/><use href="#y" x="813" y="750"/><use href="#y" x="813" y="824"/><use href="#y" x="813" y="900"/><use href="#y" x="813" y="975"/><use href="#y" x="653" y="724"/><use href="#y" x="692" y="825"/><use href="#y" x="280" y="690"/><use href="#y" x="280" y="835"/><use href="#y" x="280" y="915"/><use href="#y" x="280" y="1075"/></g>
            <path class="bundle" d="M0 722L285 698L310 725L360 745L550 1245L596 1240"/><path class="grit" d="M0 722L285 698L310 725L360 745L550 1245L596 1240"/><path class="ochre" d="M0 722L285 698L310 725L360 745L550 1245L596 1240"/>
            <path stroke-width="3" d="M285 690L320 693M350 715L385 722M520 900L545 935M540 1100L560 1130M600 1115L618 1128M420 990L440 995M384 898L420 900M440 940H470M530 1150L600 1140M540 1210L605 1200V1225M780 1185L800 1190L806 1230M675 905H695V950M735 925L760 1015M800 1110L850 1210M780 940L850 1120M660 740L690 820M290 1085L320 1160M190 840L220 920M540 1020L580 1030"/>
            <path stroke-width="2" d="M0 797L350 763L470 740M175 838L275 834L298 816L420 806M183 942L213 940M290 1092L315 1078L520 1062M440 855L690 835M520 888L705 873M600 948L780 935L810 950M610 1152L810 1132M565 1270L715 1258M780 1030L810 1046L849 1050M545 960V1020M575 1020V1100L600 1110M680 830L740 820M525 1150L560 1155L600 1150M500 1040L560 1140M480 1040L540 1150M460 1040H520M820 1120L858 1115M500 900L560 930M180 830L215 836"/>
            <path d="M0 1148L145 1135M105 1042L338 1022L388 1150L402 1158M105 1042L155 1146H187V1065M140 1100L152 1105L162 1138L187 1134M408 1152L520 1142M600 1136L815 1118V1183M408 1152L453 1260L430 1276L403 1272M375 1198L418 1200L425 1190" stroke="#7ff" stroke-width="2"/>
            <path d="M600 820L648 818L672 882" stroke="#fafa5a" stroke-width="2"/>
          </g>
          <path d="M1340 1067L1260 1077V1083" fill="none" stroke="#7ff" stroke-width="2"/>
          <!-- view cube -->
          <g class="cube">
            <path fill-rule="evenodd" class="ring" d="M1697 460a93 61 0 1 0 186 0a93 61 0 1 0-186 0ZM1718 458a72 44 0 1 0 144 0a72 44 0 1 0-144 0Z"/>
            <ellipse cx="1794" cy="464" rx="44" ry="20" class="shade"/>
            <path d="M1749 375L1817 368L1833 406L1761 414Z" fill="#f0f0f1"/><path d="M1749 375L1761 414V471L1753 430Z" fill="#d8d8da"/><path d="M1761 414L1833 406L1830 463L1761 471Z" fill="#e9e9ea"/><path class="hot" d="M1772 406L1817 400V420L1774 425Z"/>
            <text class="face" transform="translate(1797 445) rotate(-5)">RIGHT</text>
            <text class="face top" transform="translate(1785 390) rotate(82)">TOP</text>
            <text class="dir" transform="translate(1693 461) rotate(82)">S</text>
            <text class="dir" transform="translate(1864 444) rotate(-68)">N</text>
            <text class="dir" transform="translate(1798 514) rotate(83)">E</text>
          </g>
        </svg>
        <div class="navbar">
          <i class="dot"></i>
          <button aria-label="Steering wheel"><svg viewBox="0 0 36 40"><path d="M17 2H33V22Q32 36 17 37Q3 36 3 20Q3 4 17 2Z" fill="#f3f3f4" stroke="#8d9097" stroke-width="1.500"/><circle cx="18" cy="20" r="9" fill="#fff" stroke="#8d9097" stroke-width="1.500"/><circle cx="18" cy="20" r="13" fill="none" stroke="#a9acb1"/></svg></button>
          <i class="caret"></i><hr>
          <button aria-label="Zoom region"><svg viewBox="0 0 36 40"><path d="M6 10H23V28H6Z" fill="#bdd9a8" stroke="#8bb873" stroke-width="1.500"/><circle cx="22" cy="27" r="5.500" fill="#eef5fa" stroke="#999ca1" stroke-width="1.500"/><path d="M25 31L30 36" stroke="#999ca1" stroke-width="3"/></svg></button>
          <i class="caret"></i>
          <i class="dot"></i>
        </div>
        </div>
        <div class="vsb v"><svg viewBox="0 0 12 8"><path d="M1 7L6 2L11 7"/></svg><div class="track"><i></i></div><svg viewBox="0 0 12 8"><path d="M1 1L6 6L11 1"/></svg></div>
      </div>
      <div class="viewbar">
        <button class="scale">1 : 100</button>
        <div class="vicons">
          <button class="tool" aria-label="Detail level"><svg class="v" viewBox="0 0 26 26"><rect x="2" y="3" width="22" height="18" fill="#fff" stroke="#444" stroke-width="2"/><path d="M3 6H23M3 10H23M3 14H23M3 18H23" stroke="#444" stroke-dasharray="2 2" stroke-width="2"/><path d="M3 8H23M3 12H23M3 16H23" stroke="#666" stroke-dasharray="2 2" stroke-dashoffset="2" stroke-width="2"/></svg></button>
          <button class="tool" aria-label="Visual style"><svg class="v" viewBox="0 0 26 26"><path d="M2 10L8 4H24V15L18 22H2Z" fill="url(#sky)" stroke="#2367a8" stroke-width="1.800"/><path d="M2 10H18V22M18 10L24 4" fill="none" stroke="#2367a8" stroke-width="1.500"/></svg></button>
          <button class="tool" aria-label="Sun path"><svg class="v" viewBox="0 0 26 26"><path d="M10 1V20M1 10H19M3 4L17 17M17 4L3 17" stroke="#e3a21c" stroke-width="1.500"/><circle cx="10" cy="10" r="6" fill="#ffe680" stroke="#c98a17" stroke-width="1.500"/><use href="#redx" x="12" y="12" width="12" height="12"/></svg></button>
          <button class="tool" aria-label="Shadows"><svg class="v" viewBox="0 0 26 26"><ellipse cx="9" cy="20" rx="8" ry="2" fill="#999"/><circle cx="10" cy="10" r="7.500" fill="url(#sky)" stroke="#4a8fc4" stroke-width="1.800"/><use href="#redx" x="12" y="12" width="12" height="12"/></svg></button>
          <button class="tool" aria-label="Rendering dialog"><svg class="v" viewBox="0 0 26 26"><path d="M6 7H17L20 15L16 21H8L5 14L2 9" fill="#eceef1" stroke="#6a6f78" stroke-width="1.800"/><path d="M9 4H14" stroke="#6a6f78" stroke-width="2"/><use href="#bulb" x="14" y="7" width="11" height="17"/></svg></button>
          <button class="tool" aria-label="Crop view"><svg class="v" viewBox="0 0 26 26"><path d="M1 8H8V4H21V18M5 8V20H17M1 17H5M8 8V17H22" fill="none" stroke="#2472c2" stroke-width="2.500"/><use href="#redx" x="11" y="10" width="14" height="14"/></svg></button>
          <button class="tool" aria-label="Crop region"><svg class="v" viewBox="0 0 26 26"><path d="M1 8H8V4H21V18M5 8V20H17M1 17H5M8 8V17H22" fill="none" stroke="#2472c2" stroke-width="2.500"/><path d="M9 12H14" stroke="#cf2a27" stroke-width="3"/><use href="#bulb" x="14" y="6" width="11" height="17"/></svg></button>
          <button class="tool" aria-label="Lock view"><svg class="v"><use href="#house"/><rect x="14" y="14" width="9" height="8" fill="#5fa7a0" stroke="#25665f"/></svg></button>
          <button class="tool" aria-label="Hide isolate"><svg class="v" viewBox="0 0 26 26"><circle cx="9" cy="17" r="4.500" fill="#dff1f4" stroke="#555b63" stroke-width="1.800"/><circle cx="19" cy="13" r="4.500" fill="#bfe3ea" stroke="#555b63" stroke-width="1.800"/><path d="M5 15L2 8L5 6M23 11L21 4L18 3M13 16L15 15" fill="none" stroke="#555b63" stroke-width="1.800"/></svg></button>
          <button class="tool" aria-label="Reveal hidden"><svg class="v" viewBox="0 0 26 26"><use href="#bulb" x="7" y="6" width="11" height="17"/></svg></button>
          <button class="tool" aria-label="Temporary view properties"><svg class="v" viewBox="0 0 26 26"><rect x="3" y="6" width="20" height="15" fill="#f2f2f3" stroke="#333" stroke-width="2.500" stroke-dasharray="3 1"/><circle cx="18" cy="17" r="4.500" fill="#ddd" stroke="#444" stroke-width="2"/></svg></button>
          <button class="tool" aria-label="Analytical model"><svg class="v" viewBox="0 0 26 26"><path d="M2 8L8 3H21V17M2 8H15V21M2 8V21M2 14H15M8 8V21M15 8L21 3" fill="none" stroke="#555" stroke-width="2"/><path d="M2 21V14H15M8 14V22" fill="none" stroke="#b5372c" stroke-width="2"/><use href="#bulb" x="14" y="5" width="11" height="17"/></svg></button>
          <button class="tool" aria-label="Displacement sets"><svg class="v" viewBox="0 0 26 26"><path d="M8 8L13 3H23V13L19 18H8ZM2 10H8V18H2ZM8 18H19V22H8Z" fill="#c5c8cc" stroke="#555" stroke-width="1.800"/><path d="M8 8H19V18M19 8L23 3" fill="none" stroke="#555" stroke-width="1.500"/></svg></button>
          <button class="tool" aria-label="Reveal constraints"><svg class="v" viewBox="0 0 26 26"><path d="M3 6H23M3 3V21M23 3V9M3 20H13" fill="none" stroke="#444" stroke-width="2"/><path d="M16 15V11H22V15" fill="none" stroke="#777" stroke-width="2"/><rect x="14" y="14" width="10" height="8" fill="#999"/></svg></button>
        </div>
        <div class="hsb v"><svg viewBox="0 0 8 12"><path d="M7 1L2 6L7 11"/></svg><div class="track"><i></i></div><svg viewBox="0 0 8 12"><path d="M1 1L6 6L1 11"/></svg></div>
        <i class="grip"></i>
      </div>
    </section>

    <aside class="browser">
      <header class="phead"><h2>Project Browser - SCP_SN</h2><button class="x" aria-label="Close"><svg viewBox="0 0 14 14"><path d="M1 1L13 13M13 1L1 13"/></svg></button></header>
      <div class="bbody">
        <ul class="tree root">
          <li class="more"><b class="box"></b><svg class="vicon" viewBox="0 0 22 22"><path d="M5 1H1V6M17 1H21V6M5 21H1V16M17 21H21V16" fill="none" stroke="#555" stroke-width="2"/><path d="M6 8L8 5H15V14L13 17H6Z" fill="#e1e5ea" stroke="#666b74" stroke-width="2"/></svg>Views (Folder)
            <ul>
              <li><b class="box"></b>???
                <ul>
                  <li><b class="box"></b>3D View
                    <ul class="leaf"><li>3D View: L2-SN01</li><li>3D View: Navisworks</li><li>3D View: {3D}</li><li><strong>3D View: {3D} Copy 1</strong></li><li>3D View: {3D} Copy 2</li></ul></li>
                  <li><b class="box"></b>Floor Plan
                    <ul class="leaf"><li>Floor Plan: ระดับพื้นชั้น 2_ระดับพื้นชั้น B2_ระบบสุขาภิบาล</li></ul></li>
                  <li><b class="box plus"></b>Section</li>
                </ul></li>
              <li><b class="box"></b>SPACE
                <ul><li><b class="box"></b>Floor Plan
                    <ul class="leaf"><li>Floor Plan: Space_ระดับพื้นชั้น 3</li><li>Floor Plan: Space_ระดับพื้นชั้น 4</li></ul></li></ul></li>
              <li><b class="box"></b>ZZZ_Jay
                <ul>
                  <li><b class="box"></b>3D View
                    <ul class="leaf"><li>3D View: Jay 01</li></ul></li>
                  <li><b class="box"></b>Floor Plan
                    <ul class="leaf"><li>Floor Plan: ระดับพื้นชั้น 1_ระบบสุขาภิบาล Copy 1</li><li>Floor Plan: ระดับพื้นชั้น 2_ระดับพื้นชั้น B2_ระบบสุขาภิบาล Co</li><li>Floor Plan: ระดับพื้นชั้น 3 Copy 1</li><li>Floor Plan: ระดับพื้นชั้น 4_ระบบสุขาภิบาล Copy 1</li><li>Floor Plan: ระดับพื้นชั้น 8_Jay</li><li>Floor Plan: ระดับพื้นชั้น B1_ระบบสุขาภิบาล Copy 1</li><li>Floor Plan: ระดับพื้นชั้น B2 Copy 1 Copy 1</li></ul></li>
                </ul></li>
              <li class="more"><b class="box"></b>ระบบประปา
                <ul><li><b class="box"></b>Floor Plan
                    <ul class="leaf"><li>Floor Plan: ระดับพื้นชั้น 1</li><li>Floor Plan: ระดับพื้นชั้น 2</li><li>Floor Plan: ระดับพื้นชั้น 3</li><li>Floor Plan: ระดับพื้นชั้น 4</li><li>Floor Plan: ระดับพื้นชั้น 5</li><li>Floor Plan: ระดับพื้นชั้น 6</li><li>Floor Plan: ระดับพื้นชั้น 7</li><li>Floor Plan: ระดับพื้นชั้น 8</li><li class="more">Floor Plan: ระดับพื้นชั้น B1</li></ul></li></ul></li>
            </ul></li>
        </ul>
        <div class="vsb b"><svg viewBox="0 0 12 8"><path d="M1 7L6 2L11 7"/></svg><div class="track"><i></i></div><svg viewBox="0 0 12 8"><path d="M1 1L6 6L11 1"/></svg></div>
      </div>
      <div class="hsb b"><svg viewBox="0 0 8 12"><path d="M7 1L2 6L7 11"/></svg><div class="track"><i></i></div><svg viewBox="0 0 8 12"><path d="M1 1L6 6L1 11"/></svg></div>
    </aside>
  </main>

  <footer class="status">
    <span class="msg">Click to select, TAB for alternates, CTRL adds, SHIFT unselects.</span>
    <div class="mid">
      <button class="tool" aria-label="Worksets"><svg class="v" viewBox="0 0 26 26"><path d="M2 11L6 8H12V22L9 25H2Z" fill="#8ccbf2" stroke="#1565b0" stroke-width="1.800"/><path d="M10 12V5L12 3H18V10" fill="#e2f2dc" stroke="#2a7d1e" stroke-width="2"/><path d="M20 10V25M17 10Q20 17 23 10" fill="none" stroke="#444b5c" stroke-width="2"/></svg></button>
      <select class="ws" aria-label="Active workset"><option></option></select>
      <button class="tool" aria-label="Editable only" disabled><svg class="v" viewBox="0 0 26 26"><path d="M8 3H24L20 10H11ZM11 10L3 24H9L13 14" fill="#c9c9c9" stroke="#a2a2a2" stroke-width="2"/></svg></button>
      <span class="zero">:0</span>
      <button class="tool" aria-label="Design options"><svg class="v" viewBox="0 0 26 26"><rect x="2" y="3" width="22" height="20" fill="#f4f5f7" stroke="#343b47" stroke-width="2"/><path d="M2 5H24" stroke="#6b7280" stroke-width="4"/><path d="M6 10h3v3H6zM9 14V20H12M14 11H20M14 16H20M14 20H20" fill="none" stroke="#343b47" stroke-width="1.500"/></svg></button>
      <button class="tool" aria-label="Add to set" disabled><svg class="v" viewBox="0 0 26 26"><path d="M2 3H23V24H2Z" fill="#a2a2a2"/><path d="M3 12H14L10 7M14 12L10 17M14 20H22M19 17L22 20L19 23" fill="none" stroke="#f2f2f2" stroke-width="2"/></svg></button>
      <select class="opt" aria-label="Design option"><option>Main Model</option></select>
      <label class="excl"><input type="checkbox" checked>Exclude Options</label>
    </div>
    <div class="sel">
      <button class="tool" aria-label="Select links"><svg class="v" viewBox="0 0 26 26"><path d="M4 5H11V11H4ZM15 5H22V11H15ZM9 8H17" fill="none" stroke="#e3ab12" stroke-width="3"/><use href="#cursor" x="10" y="8" width="12" height="17"/></svg></button>
      <button class="tool" aria-label="Select underlay"><svg class="v" viewBox="0 0 26 26"><path d="M8 4H24L20 10H5ZM5 14H21L17 21H1Z" fill="#cfe9fa" stroke="#1f6bb5" stroke-width="2"/><use href="#cursor" x="12" y="8" width="12" height="17"/></svg></button>
      <button class="tool" aria-label="Select pinned"><svg class="v" viewBox="0 0 26 26"><path d="M6 3H18V6L16 7V12L19 16H5L8 12V7L6 6Z" fill="#f3935a" stroke="#b04c1f" stroke-width="1.800"/><path d="M11 16V24" stroke="#666" stroke-width="2"/><use href="#cursor" x="13" y="8" width="12" height="17"/></svg></button>
      <button class="tool" aria-label="Select by face"><svg class="v" viewBox="0 0 26 26"><path d="M4 7L15 2V18L4 24Z" fill="url(#sky)" stroke="#1f7ab5" stroke-width="2"/><use href="#cursor" x="12" y="8" width="12" height="17"/></svg></button>
      <button class="tool" aria-label="Drag on selection"><svg class="v" viewBox="0 0 26 26"><path d="M8 2V14M2 8H14M5 4H11M5 12H11" stroke="#333" stroke-width="2"/><use href="#redx" x="14" y="1" width="12" height="12"/><use href="#cursor" x="11" y="8" width="12" height="17"/></svg></button>
      <button class="tool" aria-label="Background processes" disabled><svg class="v" viewBox="0 0 26 26"><circle cx="13" cy="13" r="8" fill="none" stroke="#a2a2a2" stroke-width="5" stroke-dasharray="4 2"/></svg></button>
      <button class="tool" aria-label="Filter"><svg class="v" viewBox="0 0 26 26"><path d="M2 3H24L16 13V22L11 24V13Z" fill="url(#metal)" stroke="#454a52" stroke-width="2"/></svg></button>
      <span class="count">:0</span>
    </div>
  </footer>
</div>
</body>
</html>
```
FILE: styles.css
```css
* { box-sizing: border-box; }
body { margin: 0; overflow: hidden; background: #eee; color: #111; font: 17px/20px "Noto Sans", "Noto Sans Thai", sans-serif; }
button, select, input { font: inherit; color: inherit; margin: 0; }
button { padding: 0; border: 0; background: none; }
h1, h2 { margin: 0; font-size: 17px; font-weight: 400; }
a { color: inherit; text-decoration: none; }
ul { list-style: none; margin: 0; padding: 0; }
svg { display: block; }
.defs { position: absolute; width: 0; height: 0; }

/* The window is dragged slightly past both edges of the screen. */
.app { display: grid; grid-template-rows: 39px 30px 144px 39px minmax(0, 1fr) 38px; height: 100vh; margin: 0 -8px 0 -24px; }

.caret { width: 0; height: 0; border: 4px solid transparent; border-top: 7px solid #333; border-bottom: 0; }
.caret.big { border-width: 8px 6px 0; display: inline-block; }
.caret.pale { border-top-color: #777; }
.caret.up { border-top: 0; border-bottom: 6px solid #333; }
.caret.left { border: 6px solid transparent; border-right-color: #333; border-left: 0; }
.caret.lined { width: 12px; height: 12px; border: 0; border-top: 2px solid #333; background: conic-gradient(from -40deg at 50% 100%, #333 80deg, transparent 0) 0 4px / 12px 7px no-repeat; }
.bar { width: 1px; height: 30px; background: #b8b8b8; }

.titlebar { display: flex; background: #ccc; color: #333; }
.qat, .account { display: grid; align-items: center; justify-items: center; height: 29px; }
.qat { grid-template-columns: 40px 40px 40px 36px 36px 16px 38px 16px 38px 16px 40px 6px 38px 16px 38px 36px 36px 10px 34px 16px 39px 36px 12px 34px 34px 16px 30px; }
.account { grid-template-columns: 20px 36px 36px 124px 18px 46px 10px 40px 14px 83px 36px 38px 40px; }
.title { flex: 1; text-align: center; white-space: nowrap; }
.tool { display: grid; place-items: center; }
.tool.on { width: 36px; height: 29px; background: #bcdcf8; border: 2px solid #1968c4; border-top: 0; }
.tool.letter { font: 700 28px/28px "Liberation Sans", Arial, sans-serif; color: #444; }
.q { width: 26px; height: 30px; }
.help { width: 25px; height: 25px; border: 2px solid #444b5c; border-radius: 50%; background: #fff; color: #2a52b8; font-weight: 700; }

.tabs { display: flex; align-items: center; background: #ccc; color: #333; white-space: nowrap; }
.tab { line-height: 30px; padding: 0 15px 0 14px; }
.tab.file { width: 73px; padding: 0 0 0 26px; margin-right: 6px; background: #2a7ab5; color: #fff; }
.tab.current { background: #eee; border: 1px solid #f8f8f8; border-bottom: 0; color: #111; line-height: 29px; }
.collapse { display: grid; place-items: center; width: 24px; height: 14px; margin: 0 4px 0 30px; border: 2px solid #555; border-radius: 4px; background: #eee; }

.ribbon { display: flex; background: #eee; border-bottom: 2px solid #ccc; color: #333; padding-top: 2px; font-size: 16px; }
.panel { display: flex; flex-direction: column; border-right: 2px solid #dadada; }
.panel:last-child { border: 0; }
.panel h2 { text-align: center; line-height: 22px; font-size: 16px; }
.panel .caret.big { margin-left: 6px; }
.cmds { display: grid; height: 118px; padding-top: 7px; justify-content: start; }
.select { width: 91px; }
.panel.select h2 { text-align: left; padding-left: 14px; }
.build .cmds { grid-template-columns: 70px 54px 82px 120px 102px 66px 70px 68px 72px 60px 72px; }
.circulation .cmds { grid-template-columns: 94px 52px 62px; }
.model .cmds { grid-template-columns: 68px 56px 82px; }
.rooms .cmds { grid-template-columns: 68px 74px 88px 66px 80px 74px; }
.opening .cmds { grid-template-columns: 62px 54px 62px 62px 74px; }
.datum .cmds { grid-template-columns: 66px 48px; padding-right: 8px; }
.workplane .cmds { grid-template-columns: 62px 56px 60px 56px; padding-right: 6px; }
.cmd { position: relative; display: flex; flex-direction: column; align-items: center; justify-content: flex-start; line-height: 25px; white-space: nowrap; }
.cmd span { margin-top: 7px; }
.cmd .caret { margin-top: 3px; }
.cmd .caret.side { position: absolute; right: 8px; top: 73px; }
.cmd:disabled { color: #a8a8a8; }
.cmd:disabled .r { opacity: .4; }
.modify { width: 79px; height: 106px; margin-top: -3px; padding: 1px 0 0 22px; border: 2px solid #1968c4; background: linear-gradient(#c6def5, #aacdef); }
.r { width: 46px; height: 50px; fill: url(#metal); stroke: #50555d; stroke-width: 2; flex: none; }
.r *, .pipe *, .shared * { vector-effect: non-scaling-stroke; }
.options { background: #eee; }

.workspace { display: grid; grid-template-columns: 624px minmax(0, 1fr) 586px; column-gap: 4px; padding-top: 3px; background: #ccc; min-height: 0; }
.phead { display: flex; align-items: center; justify-content: space-between; height: 30px; color: #333; }
.x { width: 24px; display: grid; place-items: center; }
.x svg { width: 15px; height: 14px; fill: none; stroke: #222; stroke-width: 2.5; }
.props { display: flex; flex-direction: column; background: #eee; min-height: 0; padding-right: 4px; }
.props .phead { padding-left: 13px; }
.browser .x { width: 28px; }
.type { display: flex; align-items: center; height: 106px; border: 1px solid #ccc; border-width: 1px 1px 0 0; color: #333; background: #f0f0f0; }
.thumbnail { width: 109px; height: 98px; border: 1px solid #ccc; margin-right: 7px; display: grid; place-items: center; padding-left: 10px; }
.thumbnail svg { width: 46px; height: 46px; }
.type .caret { margin-left: auto; margin-right: 2px; }
.filter { display: flex; height: 34px; gap: 6px; }
select { appearance: none; border: 1px solid #aaa; border-radius: 0; background: #e1e1e1; background-image: linear-gradient(45deg, transparent 42%, #555 42% 58%, transparent 58%), linear-gradient(-45deg, transparent 42%, #555 42% 58%, transparent 58%); background-size: 7px 7px; background-repeat: no-repeat; background-position: right 14px center, right 9px center; }
.filter select { width: 514px; padding: 0 14px; }
.edittype { display: flex; align-items: center; gap: 4px; white-space: nowrap; }
.edittype svg { width: 18px; height: 18px; }
.gridwrap { flex: 1; display: flex; gap: 2px; min-height: 0; }
.clip { flex: 1; overflow: hidden; }
.ptable { width: 100%; table-layout: fixed; border-collapse: separate; border-spacing: 0; background: #fff; }
.c1 { width: 292px; }
.c3 { width: 18px; }
.ptable td, .ptable th { height: 30px; padding: 0; font-weight: 400; text-align: left; line-height: 26px; white-space: nowrap; }
.ptable td { border-bottom: 1px dotted #777; border-right: 1px dotted #777; padding: 0 0 2px 3px; }
.ptable td:first-child { padding-left: 20px; }
.ptable .in { padding-left: 9px; }
.ptable .sec th { background: #dcdcdc; padding-left: 9px; }
.sec button { float: right; width: 18px; height: 14px; line-height: 14px; font-size: 14px; font-weight: 700; transform: rotate(90deg); }
.ro td { color: #777; }
.edit { display: block; width: 100%; height: 28px; background: #e1e1e1; border: 2px solid #adadad; line-height: 22px; }
.ptable td:has(.edit) { padding: 0 0 0 1px; }
.ptable input { appearance: none; display: block; width: 20px; height: 20px; border: 1px solid #333; background: #fff; }
.ptable input:disabled { border-color: #ccc; }
.ptable .focus { outline: 1px solid #111; outline-offset: -1px; }
.pfoot { height: 38px; display: flex; justify-content: space-between; padding: 2px 1px 5px 12px; align-items: stretch; }
.pfoot a { color: #0a66cc; text-decoration: underline; line-height: 28px; }
.pfoot button { width: 111px; border: 1px solid #bbb; background: #ccc; color: #888; }

.vsb, .hsb { display: flex; align-items: center; background: #f0f0f0; }
.vsb { flex-direction: column; width: 24px; }
.vsb svg, .hsb svg { fill: none; stroke: #555; stroke-width: 2; flex: none; }
.vsb svg { width: 13px; height: 9px; margin: 9px 0; }
.hsb svg { width: 9px; height: 13px; margin: 0 9px; }
.track { flex: 1; display: flex; align-self: stretch; }
.vsb .track { flex-direction: column; }
.track i { background: #cdcdcd; }
.vsb.p .track i { flex: 0 0 79%; }
.vsb.v .track::before, .vsb.v .track::after, .hsb.v .track::before, .hsb.v .track::after { content: ""; flex: 1; }
.vsb.v .track i, .hsb.v .track i { flex: 0 0 26px; }
.vsb.b .track i { flex: 0 0 16%; }
.hsb.b .track i { flex: 0 0 82%; }

.doc { display: flex; flex-direction: column; min-width: 0; min-height: 0; background: #fff; }
.views { display: flex; height: 30px; background: #ccc; color: #333; }
.view { display: flex; align-items: center; gap: 10px; width: 192px; padding-left: 7px; white-space: nowrap; }
.view svg { width: 24px; height: 22px; flex: none; }
.view.first { width: 357px; padding-left: 5px; gap: 12px; }
.view.dim svg { opacity: .6; }
.view.active { background: #fff; font-weight: 700; color: #222; }
.view svg.vx { width: 15px; height: 13px; margin: 0 7px 0 auto; }
.views .end { margin: 9px 9px 0 auto; }
.stage { flex: 1; display: flex; min-height: 0; padding: 3px 4px 0 0; }
.canvas { flex: 1; position: relative; overflow: hidden; min-width: 0; margin-top: -3px; }
.drawing { width: 100%; height: 100%; }
.levels { fill: none; stroke: #858585; stroke-dasharray: 14 6 2 6; }
.tags { font-size: 6px; fill: #555; }
.pipe { fill: none; stroke: #000; stroke-width: 1.5; }
.fine { stroke: #222; stroke-width: 1; stroke-dasharray: 7 1 3 1; }
.grey { stroke: #8a8a8a; stroke-width: 3; stroke-dasharray: 12 3; }
.core { stroke: #999; stroke-width: 1; stroke-dasharray: 3 2; }
.bundle { stroke-width: 7; }
.grit { stroke: #8c8c8c; stroke-width: 4; stroke-dasharray: 2 2; }
.ochre { stroke: #7a5c14; stroke-width: 2; stroke-dasharray: 3 3; }
.cube path { stroke: #8e8e90; stroke-width: 1; }
.cube .ring { fill: #f2f2f2; stroke: #bbb; stroke-dasharray: 3 1; }
.cube .hot { fill: #dfe1e5; fill-opacity: .7; stroke: none; }
.shade { fill: #aaa; filter: blur(8px); }
.face { font: 700 17px "Noto Sans", sans-serif; fill: #8f9094; text-anchor: middle; }
.face.top { font-size: 12px; }
.dir { font: 700 26px "Noto Sans", sans-serif; fill: #eee; stroke: #999; text-anchor: middle; }
.navbar { position: absolute; right: 3px; top: 252px; width: 48px; height: 168px; padding: 4px 3px; display: flex; flex-direction: column; align-items: center; justify-content: space-between; border: 2px solid #bbb; border-radius: 5px; background: #f2f2f2; }
.navbar svg { width: 36px; height: 40px; }
.navbar hr { width: 100%; margin: 0; border: 0; border-top: 1px solid #aaa; }
.navbar .caret { border-top-color: #888; }
.dot { align-self: flex-end; width: 11px; height: 11px; border: 3px solid #aaa; border-radius: 50%; }
.viewbar { display: flex; height: 29px; border: solid #fff; border-width: 0 3px 3px; background: #f0f0f0; }
.scale { width: 116px; text-align: center; }
.vicons { display: grid; grid-template-columns: repeat(14, 32px); }
svg.v { width: 26px; height: 26px; flex: none; }
.hsb.v { flex: 1; margin-right: 8px; }
.grip { width: 12px; height: 12px; align-self: flex-end; margin: 0 4px 2px 0; background: radial-gradient(#bbb 2px, transparent 0) 0 0 / 4px 4px; clip-path: polygon(100% 0, 100% 100%, 0 100%); }
.hsb.v svg { margin: 0 8px 0 7px; }

.browser { display: flex; flex-direction: column; background: #fff; min-height: 0; }
.browser .phead { background: #eee; padding-left: 4px; }
.bbody { flex: 1; display: flex; min-height: 0; padding-top: 1px; }
.root { flex: 1; overflow: hidden; white-space: nowrap; }
.browser .hsb { height: 27px; border-bottom: 3px solid #eee; margin-right: 27px; }
.tree { line-height: 28px; }
.tree li { position: relative; padding-left: 37px; }
.tree ul > li { margin-left: -7px; }
.tree li::before { content: ""; position: absolute; left: 13px; top: 0; bottom: 0; border-left: 1px dotted #999; }
.tree li:last-child:not(.more)::before { bottom: auto; height: 14px; }
.tree.root > li::before { top: 14px; }
.tree li::after { content: ""; position: absolute; left: 14px; top: 14px; width: 21px; border-top: 1px dotted #999; }
.box { position: absolute; z-index: 1; left: 6px; top: 7px; width: 15px; height: 15px; border: 1px solid #919191; border-radius: 1px; background: linear-gradient(#3b5fb0, #3b5fb0) center / 11px 1px no-repeat, linear-gradient(#fff, #e0e0e0); }
.box.plus { background: linear-gradient(#3b5fb0, #3b5fb0) center / 11px 1px no-repeat, linear-gradient(#3b5fb0, #3b5fb0) center / 1px 11px no-repeat, #fff; }
.vicon { display: inline-block; width: 22px; height: 22px; vertical-align: -6px; margin: 0 7px 0 -5px; }
.tree strong { display: inline-block; background: #e2e2e2; padding: 0 4px; margin-left: -4px; }

.status { display: flex; align-items: center; background: #ccc; border-bottom: 1px solid #222c38; white-space: nowrap; }
.status > div { display: flex; align-items: center; }
.msg { flex: 0 0 1120px; }
.status select { height: 26px; border: 0; background-color: #fff; padding: 0 4px; }
.ws { width: 306px; margin-left: 9px; margin-right: 7px; opacity: .95; }
.opt { width: 306px; margin-left: 10px; }
.zero { width: 42px; padding-left: 6px; }
.excl { display: flex; align-items: center; gap: 4px; margin-left: 11px; }
.excl input { appearance: none; display: grid; place-items: center; width: 23px; height: 23px; border: 2px solid #555; background: #fff; }
.excl input::before { content: ""; width: 15px; height: 14px; background: #3d9a1e; clip-path: polygon(0 50%, 16% 40%, 36% 66%, 86% 0, 100% 10%, 38% 100%); }
.mid .tool + .tool { margin-left: 8px; }
.sel { margin-left: auto; padding-right: 56px; }
.sel .tool + .tool { margin-left: 9px; }
.count { padding-left: 3px; }
```
